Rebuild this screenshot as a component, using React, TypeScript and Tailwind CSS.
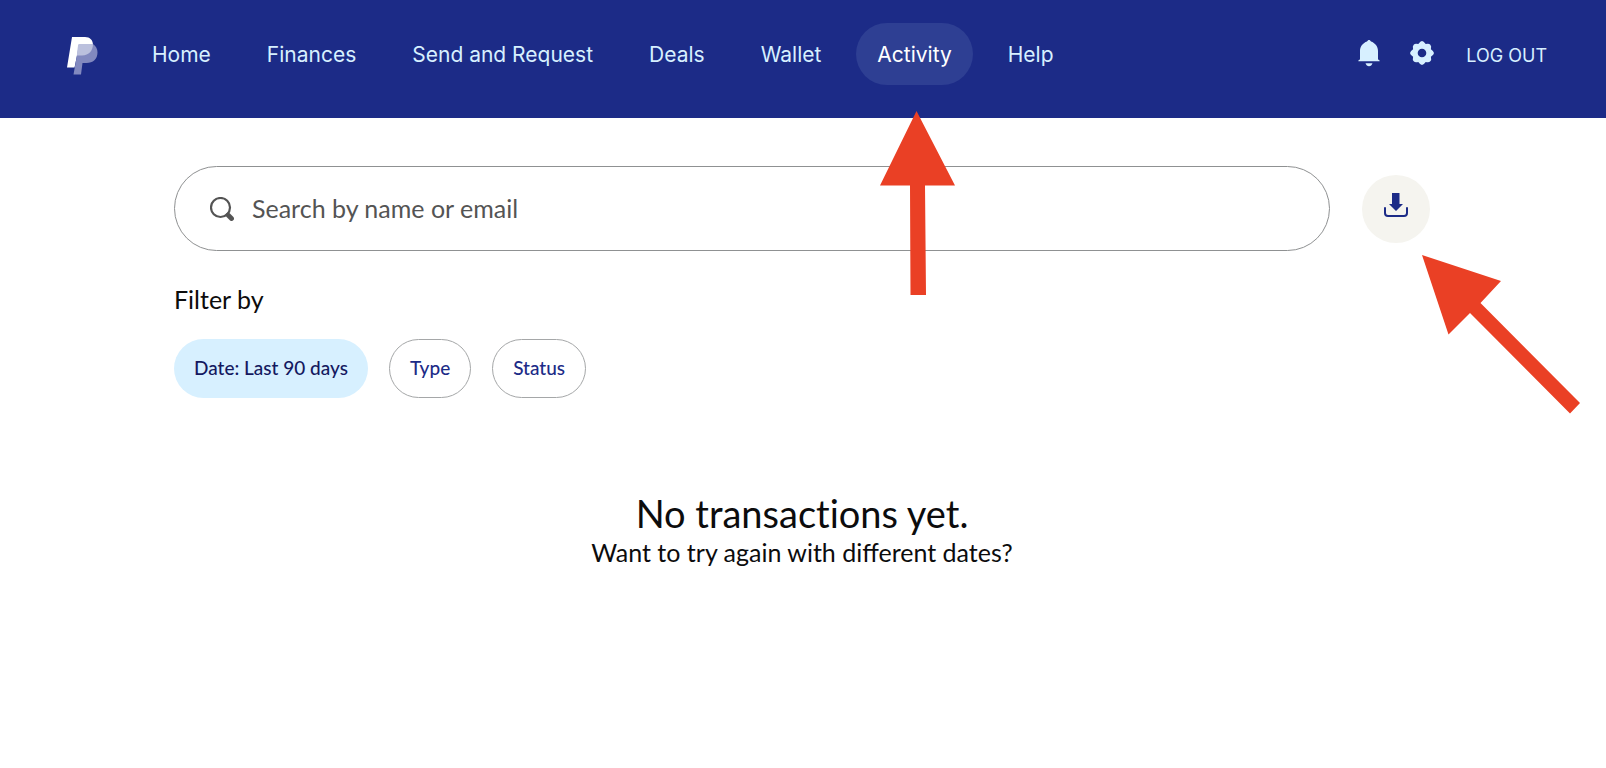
const navItems = [
  "Home",
  "Finances",
  "Send and Request",
  "Deals",
  "Wallet",
  "Activity",
  "Help",
];

const Logo = () => (
  <svg width="31" height="38" viewBox="0 0 31 38" aria-hidden="true">
    <path
      d="M5 0H18C23 0 26 3 26 8C26 14 22 18.500 15 18.500H10L7.500 30.500H0Z"
      fill="#fff"
    />
    <path
      d="M12 7H26C29 9 30.500 12 30.500 15.500C30.500 22 26 26 19.500 26H15.500L14 37.500H6.500Z"
      fill="#8289bf"
    />
    <path
      d="M12 7H26C26 13.500 22 18.500 15 18.500H9.800L11 8.500Q11.200 7 12 7Z"
      fill="#bbc0dd"
    />
  </svg>
);

const BellIcon = () => (
  <svg width="22" height="27" viewBox="0 0 22 27" fill="currentColor" aria-hidden="true">
    <path d="M11 0C11.800 0 12.500 .6 13 1.600C17 3 20 6.500 20 11V19.500Q21.700 19.700 21.700 21.300H.3Q.3 19.700 2 19.500V11C2 6.500 5 3 9 1.600C9.500 .6 10.200 0 11 0Z" />
    <path d="M7.500 23.300H14.500Q13.500 26.300 11 26.300Q8.500 26.300 7.500 23.300Z" />
  </svg>
);

const GearIcon = () => (
  <svg width="24" height="24" viewBox="0 0 24 24" fill="currentColor" aria-hidden="true">
    <path
      fillRule="evenodd"
      d="M12 0Q13.500 0 15.700 3.100Q19 2.300 20.300 3.700Q21.700 5 20.900 8.300Q24 10.500 24 12Q24 13.500 20.900 15.700Q21.700 19 20.300 20.300Q19 21.700 15.700 20.900Q13.500 24 12 24Q10.500 24 8.300 20.900Q5 21.700 3.700 20.300Q2.300 19 3.100 15.700Q0 13.500 0 12Q0 10.500 3.100 8.300Q2.300 5 3.700 3.700Q5 2.300 8.300 3.100Q10.500 0 12 0ZM12 7.700A4.300 4.300 0 1 0 12 16.300A4.300 4.300 0 1 0 12 7.700Z"
    />
  </svg>
);

const SearchIcon = () => (
  <svg width="24" height="24" viewBox="0 0 24 24" fill="none" stroke="#545454" aria-hidden="true">
    <circle cx="10.500" cy="10.500" r="9.500" strokeWidth="2.200" />
    <path d="M18 18L21.500 21.500" strokeWidth="4.800" strokeLinecap="round" />
  </svg>
);

const DownloadIcon = () => (
  <svg width="24" height="24" viewBox="0 0 24 24" aria-hidden="true">
    <path d="M8 0H15.500V11H19L12 18L5 11H8Z" fill="#1c2b87" />
    <path
      d="M1 15V20Q1 23 4 23H20Q23 23 23 20V15"
      fill="none"
      stroke="#1c2b87"
      strokeWidth="2"
      strokeLinecap="round"
    />
  </svg>
);

const UpArrow = () => (
  <svg
    className="absolute top-22 left-6 z-10 pointer-events-none"
    width="75"
    height="184"
    viewBox="0 0 75 184"
    fill="#ea4025"
    aria-hidden="true"
  >
    <path d="M36.500 0L75 74.500H45L46 184H30.500L30 74.500H0Z" />
  </svg>
);

const DiagonalArrow = () => (
  <svg
    className="absolute top-20 left-15 z-10 pointer-events-none"
    width="158"
    height="159"
    viewBox="0 0 158 159"
    fill="#ea4025"
    aria-hidden="true"
  >
    <path d="M0 0L79 26L58.500 48L158 148L148 158.500L48 58L26.500 79.500Z" />
  </svg>
);

const NavLink = ({ label, active }: { label: string; active: boolean }) => (
  <li className="relative">
    <a
      href="#"
      className={
        active
          ? "flex items-center h-[62px] pt-0.5 px-[21px] rounded-full bg-[#2e3f93] text-white"
          : "flex items-center h-[62px] pt-0.5 px-[21px] rounded-full text-[#d7f0ff]"
      }
    >
      {label}
    </a>
    {active && <UpArrow />}
  </li>
);

const Header = () => (
  <header className="flex items-start justify-between h-[118px] pt-[23px] pl-[67px] pr-[59px] bg-[#1c2b87] text-[#d7f0ff] font-['Inter',sans-serif]">
    <div className="flex items-center">
      <a href="#" aria-label="PayPal" className="mr-[33px] pt-1">
        <Logo />
      </a>
      <nav>
        <ul className="flex gap-3.5 text-[21px] whitespace-nowrap">
          {navItems.map((item) => (
            <NavLink key={item} label={item} active={item === "Activity"} />
          ))}
        </ul>
      </nav>
    </div>
    <div className="flex items-center h-[60px]">
      <button type="button" aria-label="Notifications" className="mr-[30px]">
        <BellIcon />
      </button>
      <button type="button" aria-label="Settings" className="mr-8">
        <GearIcon />
      </button>
      <button type="button" className="pt-1 text-[18px] whitespace-nowrap">
        LOG OUT
      </button>
    </div>
  </header>
);

const App = () => {
  return (
    <div className="min-h-screen bg-white text-[#0c0c0d] font-['Lato',sans-serif]">
      <Header />
      <main className="pt-12 pl-[174px] pr-44">
        <div className="flex items-center gap-8">
          <label className="flex flex-1 items-center gap-[18px] h-[85px] px-[35px] border border-[#8f9192] rounded-full">
            <SearchIcon />
            <input
              type="text"
              aria-label="Search by name or email"
              placeholder="Search by name or email"
              className="flex-1 text-[25px] outline-none placeholder:text-[#545454]"
            />
          </label>
          <div className="relative">
            <button
              type="button"
              aria-label="Download"
              className="flex items-center justify-center size-[68px] pb-2 rounded-full bg-[#f5f4ef]"
            >
              <DownloadIcon />
            </button>
            <DiagonalArrow />
          </div>
        </div>

        <h2 className="mt-8 text-[25px] leading-8">Filter by</h2>
        <div className="flex gap-[21px] mt-6 text-[19px] font-medium">
          <button
            type="button"
            className="h-[59px] px-5 rounded-full bg-[#d7f0ff] text-[#14195f]"
          >
            Date: Last 90 days
          </button>
          <button
            type="button"
            className="h-[59px] px-5 border border-[#a5a7a8] rounded-full text-[#1c2b87]"
          >
            Type
          </button>
          <button
            type="button"
            className="h-[59px] px-5 border border-[#a5a7a8] rounded-full text-[#1c2b87]"
          >
            Status
          </button>
        </div>

        <section className="mt-24 text-center">
          <h1 className="text-[38px] leading-[38px] [font-variant-ligatures:none]">
            No transactions yet.
          </h1>
          <p className="text-[25px] leading-10">
            Want to try again with different dates?
          </p>
        </section>
      </main>
    </div>
  );
};

export default App;
